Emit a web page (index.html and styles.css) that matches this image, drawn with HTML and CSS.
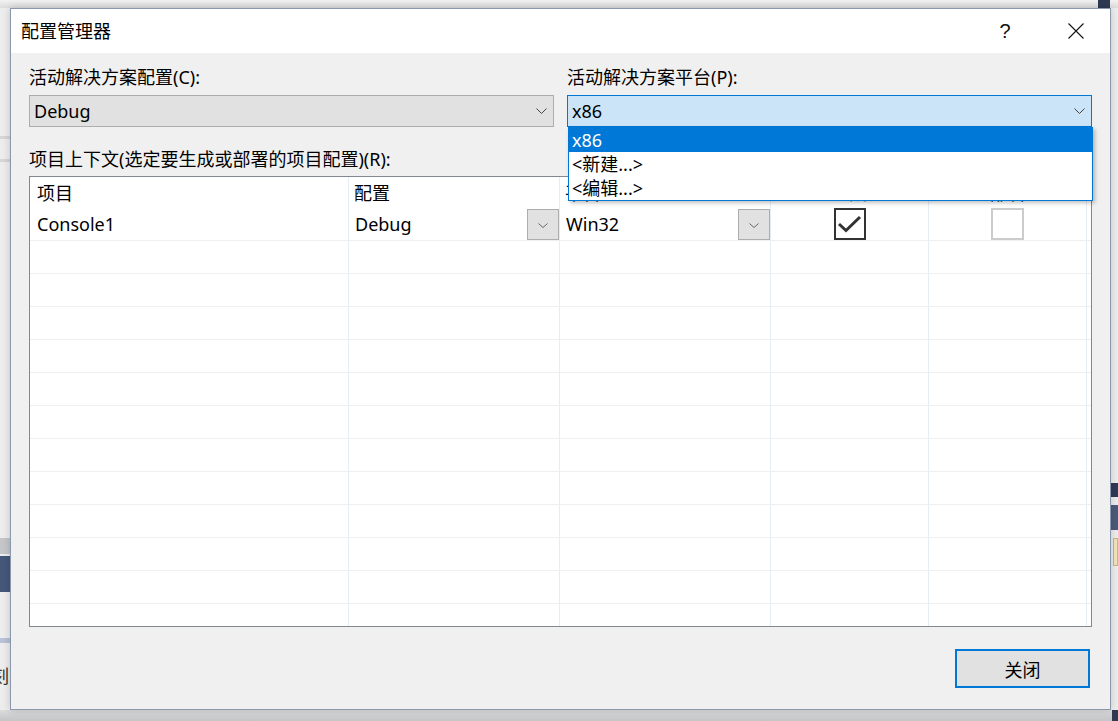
FILE: index.html
```html
<!DOCTYPE html>
<html lang="zh-CN">
<head>
<meta charset="utf-8">
<title>配置管理器</title>
<link rel="stylesheet" href="styles.css">
</head>
<body>
<div class="desktop">
  <div class="bg bg-top"></div>
  <div class="bg bg-top-navy"></div>
  <div class="bg bg-left-line1"></div>
  <div class="bg bg-left-line2"></div>
  <div class="bg bg-left-band"></div>
  <div class="bg bg-left-navy"></div>
  <div class="bg bg-left-blue"></div>
  <div class="bg bg-left-char">刻</div>
  <div class="bg bg-right-navy"></div>
  <div class="bg bg-right-navy2"></div>
  <div class="bg bg-right-tip"></div>
  <div class="bg bg-bottom"></div>
  <div class="bg bg-bottom-navy"></div>

  <div class="dialog">
    <div class="titlebar">
      <div class="title">配置管理器</div>
      <div class="capbtn help">?</div>
      <div class="capbtn close">
        <svg width="16" height="16" viewBox="0 0 16 16"><path d="M0.5 0.5 L15.5 15.5 M15.5 0.5 L0.5 15.5" stroke="#111" stroke-width="1.1" fill="none"/></svg>
      </div>
    </div>
    <div class="content">
      <div class="toprow">
        <div class="field">
          <div class="label">活动解决方案配置(C):</div>
          <div class="combo">
            <span class="combo-text">Debug</span>
            <svg class="chev" width="11" height="7" viewBox="0 0 11 7"><path d="M0.5 0.5 L5.5 5.5 L10.5 0.5" stroke="#444" stroke-width="1" fill="none"/></svg>
          </div>
        </div>
        <div class="field">
          <div class="label">活动解决方案平台(P):</div>
          <div class="combo focused">
            <span class="combo-text">x86</span>
            <svg class="chev" width="11" height="7" viewBox="0 0 11 7"><path d="M0.5 0.5 L5.5 5.5 L10.5 0.5" stroke="#444" stroke-width="1" fill="none"/></svg>
            <div class="dropdown">
              <div class="item selected">x86</div>
              <div class="item">&lt;新建...&gt;</div>
              <div class="item">&lt;编辑...&gt;</div>
            </div>
          </div>
        </div>
      </div>
      <div class="label label2">项目上下文(选定要生成或部署的项目配置)(R):</div>
      <div class="grid">
        <div class="row head">
          <div class="cell c1">项目</div>
          <div class="cell c2 h2">配置</div>
          <div class="cell c3 h2">平台</div>
          <div class="cell c4 hc">生成</div>
          <div class="cell c5 hc">部署</div>
          <div class="cell c6"></div>
        </div>
        <div class="row">
          <div class="cell c1">Console1</div>
          <div class="cell c2 withbtn"><span>Debug</span><span class="cellbtn"><svg width="10" height="6" viewBox="0 0 10 6"><path d="M0.5 0.5 L5 4.5 L9.5 0.5" stroke="#666" stroke-width="1" fill="none"/></svg></span></div>
          <div class="cell c3 withbtn"><span>Win32</span><span class="cellbtn"><svg width="10" height="6" viewBox="0 0 10 6"><path d="M0.5 0.5 L5 4.5 L9.5 0.5" stroke="#666" stroke-width="1" fill="none"/></svg></span></div>
          <div class="cell c4 center"><span class="check on"><svg width="28" height="27" viewBox="0 0 28 27"><path d="M3 13 L10 19.5 L24 6" stroke="#333" stroke-width="3" fill="none"/></svg></span></div>
          <div class="cell c5 center"><span class="check off"></span></div>
          <div class="cell c6"></div>
        </div>
        <div class="row"><div class="cell c1"></div><div class="cell c2"></div><div class="cell c3"></div><div class="cell c4"></div><div class="cell c5"></div><div class="cell c6"></div></div>
        <div class="row"><div class="cell c1"></div><div class="cell c2"></div><div class="cell c3"></div><div class="cell c4"></div><div class="cell c5"></div><div class="cell c6"></div></div>
        <div class="row"><div class="cell c1"></div><div class="cell c2"></div><div class="cell c3"></div><div class="cell c4"></div><div class="cell c5"></div><div class="cell c6"></div></div>
        <div class="row"><div class="cell c1"></div><div class="cell c2"></div><div class="cell c3"></div><div class="cell c4"></div><div class="cell c5"></div><div class="cell c6"></div></div>
        <div class="row"><div class="cell c1"></div><div class="cell c2"></div><div class="cell c3"></div><div class="cell c4"></div><div class="cell c5"></div><div class="cell c6"></div></div>
        <div class="row"><div class="cell c1"></div><div class="cell c2"></div><div class="cell c3"></div><div class="cell c4"></div><div class="cell c5"></div><div class="cell c6"></div></div>
        <div class="row"><div class="cell c1"></div><div class="cell c2"></div><div class="cell c3"></div><div class="cell c4"></div><div class="cell c5"></div><div class="cell c6"></div></div>
        <div class="row"><div class="cell c1"></div><div class="cell c2"></div><div class="cell c3"></div><div class="cell c4"></div><div class="cell c5"></div><div class="cell c6"></div></div>
        <div class="row"><div class="cell c1"></div><div class="cell c2"></div><div class="cell c3"></div><div class="cell c4"></div><div class="cell c5"></div><div class="cell c6"></div></div>
        <div class="row"><div class="cell c1"></div><div class="cell c2"></div><div class="cell c3"></div><div class="cell c4"></div><div class="cell c5"></div><div class="cell c6"></div></div>
        <div class="row"><div class="cell c1"></div><div class="cell c2"></div><div class="cell c3"></div><div class="cell c4"></div><div class="cell c5"></div><div class="cell c6"></div></div>
        <div class="row"><div class="cell c1"></div><div class="cell c2"></div><div class="cell c3"></div><div class="cell c4"></div><div class="cell c5"></div><div class="cell c6"></div></div>
      </div>
      <div class="footer">
        <div class="button">关闭</div>
      </div>
    </div>
  </div>
</div>
</body>
</html>
```

FILE: styles.css
```css
* { box-sizing: border-box; }
html, body { margin: 0; padding: 0; }
body {
  width: 1118px;
  height: 721px;
  overflow: hidden;
  font-family: "Noto Sans", "Noto Sans CJK SC", sans-serif;
  font-size: 18px;
  color: #000;
  background: #ececec;
}
.desktop { position: relative; width: 1118px; height: 721px; overflow: hidden; background: #ededed; }

.bg { position: absolute; }
.bg-top { left: 0; top: 0; width: 1118px; height: 8px; background: linear-gradient(#f2f2f2, #dcdcdc); }
.bg-top-navy { left: 1098px; top: 0; width: 12px; height: 8px; background: #2e3a52; }
.bg-left-line1 { left: 0; top: 136px; width: 10px; height: 3px; background: #d6d6d6; }
.bg-left-line2 { left: 0; top: 159px; width: 10px; height: 3px; background: #d6d6d6; }
.bg-left-band { left: 0; top: 538px; width: 10px; height: 16px; background: #c5c6ca; }
.bg-left-navy { left: 0; top: 556px; width: 10px; height: 36px; background: #45587a; }
.bg-left-blue { left: 0; top: 638px; width: 10px; height: 5px; background: #b9c2d6; }
.bg-left-char { left: -9px; top: 664px; font-size: 18px; line-height: 24px; color: #333; }
.bg-right-navy { left: 1111px; top: 483px; width: 7px; height: 14px; background: #2f3b55; }
.bg-right-navy2 { left: 1111px; top: 505px; width: 7px; height: 25px; background: #4a5b7a; }
.bg-right-tip { left: 1113px; top: 538px; width: 5px; height: 28px; background: #f3e6b8; border: 1px solid #c8b780; }
.bg-bottom { left: 0; top: 710px; width: 1118px; height: 11px; background: linear-gradient(#dcdcdc, #c3c4c7); }
.bg-bottom-navy { left: 1112px; top: 710px; width: 6px; height: 11px; background: #2e3a52; }

.dialog {
  position: absolute;
  left: 10px;
  top: 8px;
  width: 1101px;
  height: 702px;
  border: 1px solid #8a97ad;
  background: #f0f0f0;
  box-shadow: 0 0 8px rgba(0,0,0,0.18);
  display: flex;
  flex-direction: column;
}

.titlebar {
  height: 44px;
  background: #fff;
  display: flex;
  align-items: center;
  flex-shrink: 0;
}
.title { flex: 1; padding-left: 10px; font-size: 18px; line-height: 24px; }
.capbtn {
  width: 70px;
  height: 44px;
  display: flex;
  align-items: center;
  justify-content: center;
}
.help { font-size: 20px; font-family: "Liberation Sans", sans-serif; color: #111; padding-top: 0px; }
.close svg { display: block; margin-left: 2px; }

.content {
  flex: 1;
  padding: 12px 18px 0 18px;
  display: flex;
  flex-direction: column;
}
.toprow { display: flex; gap: 13px; }
.field { flex: 1; display: flex; flex-direction: column; }
.label { height: 24px; line-height: 24px; font-size: 18px; white-space: nowrap; }
.field .label { margin-bottom: 6px; }

.combo {
  position: relative;
  height: 32px;
  background: #e1e1e1;
  border: 1px solid #adadad;
  display: flex;
  align-items: center;
  padding-left: 4px;
  padding-right: 6px;
}
.combo.focused { background: #cce4f7; border-color: #0078d7; }
.combo-text { flex: 1; line-height: 24px; }
.chev { display: block; margin-top: 1px; margin-right: 0; }

.dropdown {
  position: absolute;
  left: 0px;
  top: 31px;
  width: 525px;
  background: #fff;
  border: 1px solid #0078d7;
  box-shadow: 2px 2px 4px rgba(0,0,0,0.25);
  z-index: 5;
}
.item { height: 24px; line-height: 24px; padding-left: 3px; font-size: 18px; white-space: nowrap; }
.item.selected { background: #0078d7; color: #fff; }

.label2 { margin-top: 20px; }

.grid {
  margin-top: 5px;
  height: 451px;
  background: #fff;
  border: 1px solid #828790;
  overflow: hidden;
  flex-shrink: 0;
}
.row {
  display: grid;
  grid-template-columns: 319px 211px 211px 158px 158px 1fr;
  height: 33px;
  border-bottom: 1px solid #efefef;
}
.row.head { height: 31px; border-bottom: none; }
.cell {
  border-right: 1px solid #e6ecf4;
  display: flex;
  align-items: center;
  padding-left: 6px;
  line-height: 24px;
  white-space: nowrap;
  overflow: hidden;
}
.cell.c1 { padding-left: 7px; }
.cell.h2 { padding-left: 5px; }
.cell.c6 { border-right: none; }
.cell.hc { justify-content: center; padding-left: 0; }
.cell.center { justify-content: center; padding-left: 0; }
.withbtn { justify-content: space-between; padding-right: 0; }
.cellbtn {
  width: 32px;
  height: 31px;
  margin-top: 1px;
  background: #e1e1e1;
  border: 1px solid #adadad;
  display: flex;
  align-items: center;
  justify-content: center;
}
.cellbtn svg { display: block; margin-top: 2px; }
.check {
  width: 32px;
  height: 32px;
  display: flex;
  align-items: center;
  justify-content: center;
}
.check.on { border: 2px solid #333; }
.check.off { border: 2px solid #cccccc; width: 33px; }
.check svg { display: block; }

.footer {
  display: flex;
  justify-content: flex-end;
  padding-top: 22px;
  padding-right: 2px;
}
.button {
  width: 135px;
  height: 39px;
  background: #e1e1e1;
  border: 2px solid #0078d7;
  display: flex;
  align-items: center;
  justify-content: center;
  font-size: 18px;
}
```
